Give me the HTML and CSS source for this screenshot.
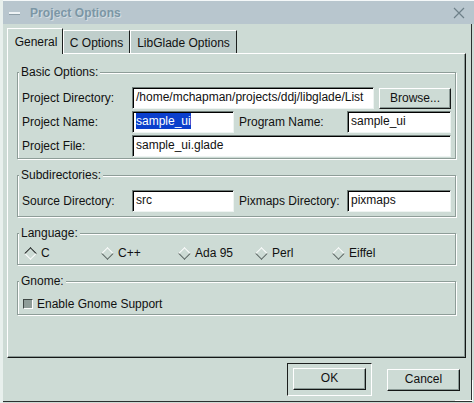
FILE: index.html
```html
<!DOCTYPE html>
<html lang="en">
<head>
    <meta charset="UTF-8">
    <title>Project Options</title>
    <link rel="stylesheet" href="styles.css">
</head>
<body>
    <div class="window">
        <div class="titlebar">
            <span class="menu-dash"></span>
            <span class="title">Project Options</span>
            <svg class="close" width="12" height="12" viewBox="0 0 12 12">
                <path d="M1 1 L11 11 M11 1 L1 11" stroke="#6e8089" stroke-width="1.2" fill="none"/>
            </svg>
        </div>

        <div class="content">
            <div class="tabs">
                <div class="tab active tab-general">General</div>
                <div class="tab tab-c">C Options</div>
                <div class="tab tab-libglade">LibGlade Options</div>
            </div>

            <div class="panel">
                <fieldset class="group basic">
                    <legend>Basic Options:</legend>
                    <div class="row">
                        <span class="label">Project Directory:</span>
                        <div class="entry entry-dir">/home/mchapman/projects/ddj/libglade/List</div>
                        <div class="button browse">Browse...</div>
                    </div>
                    <div class="row">
                        <span class="label">Project Name:</span>
                        <div class="entry entry-short"><span class="selected">sample_ui</span></div>
                        <span class="label label-second">Program Name:</span>
                        <div class="entry entry-right">sample_ui</div>
                    </div>
                    <div class="row">
                        <span class="label">Project File:</span>
                        <div class="entry entry-file">sample_ui.glade</div>
                    </div>
                </fieldset>

                <fieldset class="group subdirs">
                    <legend>Subdirectories:</legend>
                    <div class="row">
                        <span class="label">Source Directory:</span>
                        <div class="entry entry-short">src</div>
                        <span class="label label-second">Pixmaps Directory:</span>
                        <div class="entry entry-right">pixmaps</div>
                    </div>
                </fieldset>

                <fieldset class="group language">
                    <legend>Language:</legend>
                    <div class="radios">
                        <div class="radio"><span class="radio-mark"><span class="diamond on"></span></span>C</div>
                        <div class="radio"><span class="radio-mark"><span class="diamond"></span></span>C++</div>
                        <div class="radio"><span class="radio-mark"><span class="diamond"></span></span>Ada 95</div>
                        <div class="radio"><span class="radio-mark"><span class="diamond"></span></span>Perl</div>
                        <div class="radio"><span class="radio-mark"><span class="diamond"></span></span>Eiffel</div>
                    </div>
                </fieldset>

                <fieldset class="group gnome">
                    <legend>Gnome:</legend>
                    <div class="check">
                        <span class="check-box"></span>
                        Enable Gnome Support
                    </div>
                </fieldset>
            </div>

            <div class="actions">
                <div class="default-frame">
                    <div class="button action">OK</div>
                </div>
                <div class="button action">Cancel</div>
            </div>
        </div>
        <span class="grip"></span>
    </div>
</body>
</html>
```

FILE: styles.css
```css
body {
    margin: 0;
    font-family: "Liberation Sans", Arial, sans-serif;
    font-size: 12px;
    color: #111;
    background: #cddbd5;
}

.window {
    position: relative;
    width: 474px;
    height: 403px;
    box-sizing: border-box;
    border-left: 3px solid #e8f0ed;
    background: #cddbd5;
    box-shadow: inset -2px -1px 0 #cddbd5, inset -3px -2px 0 #2c3130;
}

/* title bar */
.titlebar {
    display: flex;
    align-items: center;
    height: 24px;
    box-sizing: border-box;
    border-top: 1px solid #f4f8f9;
    background: #b8c6ce;
    padding-left: 6px;
}

.menu-dash {
    width: 11px;
    height: 2px;
    background: #eef3f5;
    box-shadow: 0 1px 0 #8d9ea7;
    margin-right: 10px;
}

.title {
    font-weight: bold;
    font-size: 12px;
    color: #7b96a5;
    text-shadow: 1px 1px 0 #d3dde2;
    letter-spacing: 0.1px;
}

.close {
    margin-left: auto;
    margin-right: 9px;
}

/* notebook */
.content {
    padding: 0 8px 0 4px;
}

.tabs {
    display: flex;
    align-items: flex-end;
    height: 29px;
}

.tab {
    box-sizing: border-box;
    height: 23px;
    padding-top: 5px;
    text-align: center;
    line-height: 14px;
    background: #bfcecb;
    border-top: 1px solid #fff;
    border-left: 1px solid #fff;
    border-right: 1px solid #1c1f1e;
}

.tab.active {
    position: relative;
    height: 26px;
    padding-top: 6px;
    margin-bottom: -1px;
    background: #cddbd5;
}

.tab-general { width: 56px; padding-left: 2px; }
.tab-c { width: 67px; }
.tab-libglade { width: 107px; }

.panel {
    height: 305px;
    box-sizing: border-box;
    border-top: 1px solid #fff;
    border-left: 1px solid #fff;
    border-right: 1px solid #141716;
    border-bottom: 1px solid #141716;
    box-shadow: inset -1px -1px 0 #8a9995;
    padding: 11px 9px 0 9px;
}

/* frames */
.group {
    margin: 9px 0 0 0;
    padding: 8px 4px 1px 4px;
    min-width: 0;
    border: 1px solid #8e9d98;
    box-shadow: 1px 1px 0 #fff, inset 1px 1px 0 #fff;
}

.group.basic { margin-top: 0; }
.group.subdirs { padding-bottom: 4px; }
.group.language { padding-top: 5px; padding-bottom: 3px; }
.group.gnome { padding-top: 8px; padding-bottom: 2px; }

legend {
    margin-left: -3px;
    padding: 0 2px;
    line-height: 14px;
    background: #cddbd5;
}

.row {
    display: flex;
    align-items: center;
    height: 22px;
}

.row + .row {
    margin-top: 2px;
}

.label {
    width: 110px;
    flex-shrink: 0;
}

.label-second {
    width: 108px;
    margin-left: 5px;
}

.entry {
    box-sizing: border-box;
    height: 22px;
    line-height: 19px;
    padding-left: 3px;
    background: #fff;
    border: 1px solid;
    border-color: #6f7c78 #eef4f2 #eef4f2 #6f7c78;
    box-shadow: inset 1px 1px 0 #000;
    white-space: nowrap;
    overflow: hidden;
}

.entry-dir { width: 242px; }
.entry-short { width: 102px; }
.entry-right { width: 104px; }
.entry-file { width: 319px; }

.selected {
    background: #0b3fcc;
    color: #fff;
    padding: 1px 0;
}

.button {
    box-sizing: border-box;
    height: 21px;
    line-height: 18px;
    text-align: center;
    background: #cddbd5;
    border: 1px solid;
    border-color: #fff #141716 #141716 #fff;
    box-shadow: inset -1px -1px 0 #8a9995;
}

.browse {
    width: 72px;
    margin-left: 5px;
}

/* radios */
.radios {
    display: grid;
    grid-template-columns: repeat(5, 77px);
    height: 16px;
}

.radio {
    display: flex;
    align-items: center;
    gap: 6px;
}

.radio-mark {
    display: flex;
    align-items: center;
    justify-content: center;
    width: 10px;
    height: 10px;
    margin-left: 3px;
}

.diamond {
    width: 7px;
    height: 7px;
    flex-shrink: 0;
    transform: rotate(45deg);
    border: 1px solid;
    border-color: #fff #56615e #56615e #fff;
}

.diamond.on {
    border-color: #1a1d1c #fff #fff #1a1d1c;
}

/* checkbox */
.check {
    display: flex;
    align-items: center;
    height: 16px;
}

.check-box {
    box-sizing: border-box;
    width: 10px;
    height: 10px;
    margin: 0 4px 0 1px;
    background: #8f9d99;
    border: 1px solid;
    border-color: #3f4745 #fff #fff #3f4745;
}

/* dialog buttons */
.actions {
    display: flex;
    justify-content: flex-end;
    align-items: center;
    gap: 15px;
    margin-top: 5px;
    padding-right: 6px;
}

.default-frame {
    padding: 4px 5px 5px 5px;
    border: 1px solid;
    border-color: #1c1f1e #fff #fff #1c1f1e;
}

.action {
    width: 73px;
    height: 22px;
    line-height: 19px;
}

.grip {
    position: absolute;
    right: 1px;
    bottom: 2px;
    width: 17px;
    height: 20px;
    border-right: 1px solid #fff;
    border-bottom: 1px solid #fff;
}
```
